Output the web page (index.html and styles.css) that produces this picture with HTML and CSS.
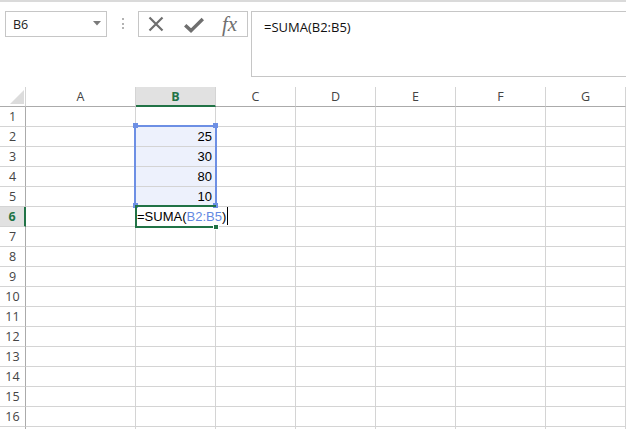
FILE: index.html
```html
<!DOCTYPE html>
<html>
<head>
<meta charset="utf-8">
<title>Hoja</title>
<link rel="stylesheet" href="styles.css">
</head>
<body>
<div class="app">
  <div class="topline"></div>
  <div class="fbar">
    <div class="namebox">
      <span class="ref">B6</span>
      <svg class="dd" width="8" height="5" viewBox="0 0 8 5"><path d="M0 0H8L4 4.5Z" fill="#7a7a7a"/></svg>
    </div>
    <div class="grip"><i></i><i></i><i></i></div>
    <div class="btns">
      <svg class="ico-x" width="16" height="16" viewBox="0 0 16 16"><path d="M1.5 1.5L14.5 14.5M14.5 1.5L1.5 14.5" stroke="#6f6f6f" stroke-width="2.2" fill="none"/></svg>
      <svg class="ico-ok" width="20" height="16" viewBox="0 0 20 16"><path d="M1.2 8.2L7 13.6L18.8 2" stroke="#6f6f6f" stroke-width="3.4" fill="none"/></svg>
      <span class="fx">fx</span>
    </div>
    <div class="finput">=SUMA(B2:B5)</div>
  </div>
  <div class="sheet">
    <div class="corner"><svg width="14" height="14" viewBox="0 0 14 14"><path d="M14 0V14H0Z" fill="#dcdcdc"/></svg></div>
    <div class="ch">A</div><div class="ch cur">B</div><div class="ch">C</div><div class="ch">D</div><div class="ch">E</div><div class="ch">F</div><div class="ch">G</div>

    <div class="rh">1</div><div class="c"></div><div class="c"></div><div class="c"></div><div class="c"></div><div class="c"></div><div class="c"></div><div class="c"></div>
    <div class="rh">2</div><div class="c"></div><div class="c sel">25</div><div class="c"></div><div class="c"></div><div class="c"></div><div class="c"></div><div class="c"></div>
    <div class="rh">3</div><div class="c"></div><div class="c sel">30</div><div class="c"></div><div class="c"></div><div class="c"></div><div class="c"></div><div class="c"></div>
    <div class="rh">4</div><div class="c"></div><div class="c sel">80</div><div class="c"></div><div class="c"></div><div class="c"></div><div class="c"></div><div class="c"></div>
    <div class="rh">5</div><div class="c"></div><div class="c sel">10</div><div class="c"></div><div class="c"></div><div class="c"></div><div class="c"></div><div class="c"></div>
    <div class="rh cur">6</div><div class="c"></div><div class="c"></div><div class="c"></div><div class="c"></div><div class="c"></div><div class="c"></div><div class="c"></div>
    <div class="rh">7</div><div class="c"></div><div class="c"></div><div class="c"></div><div class="c"></div><div class="c"></div><div class="c"></div><div class="c"></div>
    <div class="rh">8</div><div class="c"></div><div class="c"></div><div class="c"></div><div class="c"></div><div class="c"></div><div class="c"></div><div class="c"></div>
    <div class="rh">9</div><div class="c"></div><div class="c"></div><div class="c"></div><div class="c"></div><div class="c"></div><div class="c"></div><div class="c"></div>
    <div class="rh">10</div><div class="c"></div><div class="c"></div><div class="c"></div><div class="c"></div><div class="c"></div><div class="c"></div><div class="c"></div>
    <div class="rh">11</div><div class="c"></div><div class="c"></div><div class="c"></div><div class="c"></div><div class="c"></div><div class="c"></div><div class="c"></div>
    <div class="rh">12</div><div class="c"></div><div class="c"></div><div class="c"></div><div class="c"></div><div class="c"></div><div class="c"></div><div class="c"></div>
    <div class="rh">13</div><div class="c"></div><div class="c"></div><div class="c"></div><div class="c"></div><div class="c"></div><div class="c"></div><div class="c"></div>
    <div class="rh">14</div><div class="c"></div><div class="c"></div><div class="c"></div><div class="c"></div><div class="c"></div><div class="c"></div><div class="c"></div>
    <div class="rh">15</div><div class="c"></div><div class="c"></div><div class="c"></div><div class="c"></div><div class="c"></div><div class="c"></div><div class="c"></div>
    <div class="rh">16</div><div class="c"></div><div class="c"></div><div class="c"></div><div class="c"></div><div class="c"></div><div class="c"></div><div class="c"></div>
    <div class="rh"></div><div class="c"></div><div class="c"></div><div class="c"></div><div class="c"></div><div class="c"></div><div class="c"></div><div class="c"></div>

    <div class="editor">=SUMA(<span class="refc">B2:B5</span>)<i class="caret"></i></div>
    <div class="range"><i class="h tl"></i><i class="h tr"></i><i class="h bl"></i><i class="h br"></i></div>
    <div class="active"><i class="fillh"></i></div>
  </div>
</div>
</body>
</html>
```
FILE: styles.css
```css
* { box-sizing: border-box; }
html, body { margin: 0; padding: 0; }
body {
  width: 626px;
  height: 429px;
  overflow: hidden;
  background: #fff;
  font-family: "Open Sans", "Noto Sans", sans-serif;
}
.app { width: 626px; }
.topline { height: 2px; background: #dadada; }

/* formula bar */
.fbar {
  display: flex;
  align-items: flex-start;
  padding-top: 9px;
  height: 85px;
}
.namebox {
  margin-left: 5px;
  width: 102px;
  height: 26px;
  border: 1px solid #c6c6c6;
  display: flex;
  align-items: center;
  justify-content: space-between;
  padding: 0 5px 0 7px;
  font-size: 12.5px;
  color: #222;
}
.namebox .dd { display: block; margin-top: -2px; }
.grip {
  width: 31px;
  display: flex;
  flex-direction: column;
  align-items: center;
  gap: 2.5px;
  padding-top: 7px;
}
.grip i { display: block; width: 2px; height: 2px; background: #b3b3b3; }
.btns {
  width: 110px;
  height: 26px;
  border: 1px solid #c6c6c6;
  display: flex;
  align-items: center;
}
.ico-x { display: block; margin-left: 9px; }
.ico-ok { display: block; margin-left: 20px; margin-top: 1px; }
.fx {
  margin-left: 18px;
  font-family: "Liberation Serif", "DejaVu Serif", serif;
  font-style: italic;
  font-size: 21px;
  line-height: 20px;
  color: #6f6f6f;
  margin-top: -1px;
}
.finput {
  margin-left: 3px;
  flex: 1;
  height: 66px;
  border: 1px solid #c6c6c6;
  border-right: none;
  padding: 6px 0 0 12px;
  font-size: 13px;
  line-height: 18px;
  color: #111;
}

/* sheet */
.sheet {
  position: relative;
  display: grid;
  grid-template-columns: 26px 110px 80px 80px 80px 80px 90px 80px;
  grid-auto-rows: 20px;
}
.corner {
  border-right: 1px solid #d4d4d4;
  border-bottom: 1px solid #ababab;
  display: flex;
  justify-content: flex-end;
  align-items: flex-end;
  padding: 0 1px 2px 0;
}
.corner svg { display: block; }
.ch {
  border-right: 1px solid #d4d4d4;
  border-bottom: 1px solid #ababab;
  text-align: center;
  font-size: 12.5px;
  line-height: 19px;
  color: #444;
}
.ch.cur {
  background: #e1e1e1;
  border-bottom: 2px solid #217346;
  color: #217346;
  font-weight: 700;
}
.rh {
  border-right: 1px solid #ababab;
  border-bottom: 1px solid #d4d4d4;
  text-align: center;
  font-size: 12.5px;
  line-height: 19px;
  color: #444;
}
.rh.cur {
  background: #e1e1e1;
  border-right: 2px solid #217346;
  color: #217346;
  font-weight: 700;
}
.c {
  border-right: 1px solid #d4d4d4;
  border-bottom: 1px solid #d4d4d4;
  font-family: "Liberation Sans", Arial, sans-serif;
  font-size: 13px;
  line-height: 19px;
  text-align: right;
  padding-right: 3px;
  color: #000;
}
.c.sel { background: #edf1fc; }

/* overlays: in-cell editor, referenced range, active cell */
.editor {
  position: absolute;
  left: 137px;
  top: 120px;
  height: 19px;
  padding-right: 3px;
  background: #fff;
  white-space: nowrap;
  font-family: "Liberation Sans", Arial, sans-serif;
  font-size: 13px;
  line-height: 19px;
  color: #000;
}
.refc { color: #6389e2; }
.caret {
  display: inline-block;
  vertical-align: top;
  width: 1px;
  height: 18px;
  margin-left: 1px;
  background: #000;
}
.range {
  position: absolute;
  left: 134px;
  top: 38px;
  width: 83px;
  height: 82px;
  border: 2px solid #6d8fe4;
}
.range .h {
  position: absolute;
  width: 5px;
  height: 5px;
  background: #6d8fe4;
}
.range .tl { left: -3px; top: -4px; }
.range .tr { left: 77px; top: -4px; }
.range .bl { left: -3px; top: 76px; }
.range .br { left: 77px; top: 76px; }
.active {
  position: absolute;
  left: 135px;
  top: 118px;
  width: 81px;
  height: 23px;
  border: 2px solid #217346;
  border-right: none;
}
.fillh {
  position: absolute;
  right: -3px;
  bottom: -4px;
  width: 6px;
  height: 6px;
  background: #217346;
  border: 1px solid #fff;
}
```
